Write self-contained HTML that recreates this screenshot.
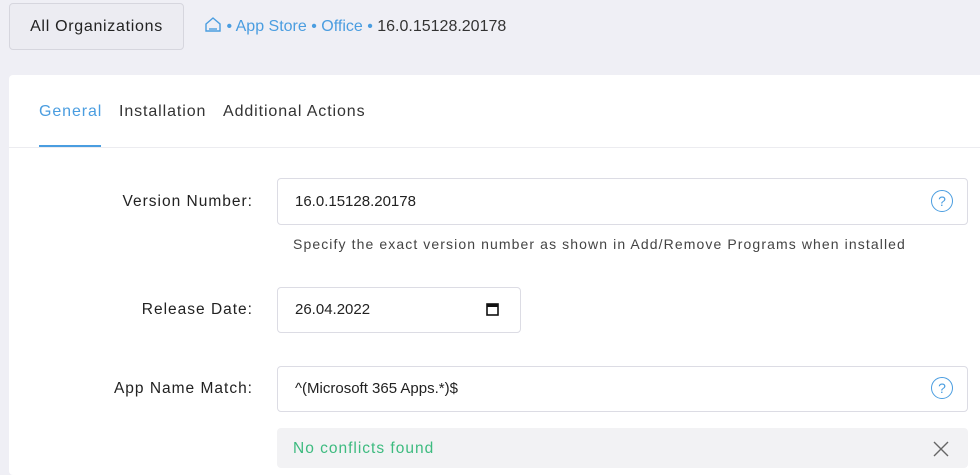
<!DOCTYPE html>
<html><head><style>
body{margin:0;width:980px;height:466px;overflow:hidden;background:#efeff5;font-family:"Liberation Sans",sans-serif;position:relative;color:#333;}
.abs{position:absolute}
.btn{left:9px;top:3px;width:175px;height:47px;border:1px solid #d6d6de;border-radius:4px;background:#ececf2;box-sizing:border-box;font-size:16px;letter-spacing:0.7px;line-height:45px;text-align:center;color:#222}
.bc{left:204px;top:16px;font-size:16px;color:#333;white-space:nowrap}
.bc a{color:#4a9de0}
.card{left:9px;top:75px;width:980px;height:400px;background:#fff;border-radius:4px}
.tab{top:103px;font-size:16px;letter-spacing:0.9px;color:#333}
.lbl{font-size:15.5px;letter-spacing:1px;color:#222;text-align:right;right:727px}
.inp{border:1px solid #dcdce4;border-radius:4px;background:#fff;box-sizing:border-box;font-size:15px;color:#222;padding-left:17px}
.q{width:22px;height:22px;border:1.5px solid #4a9de0;border-radius:50%;color:#4a9de0;font-size:14px;text-align:center;line-height:20px;box-sizing:border-box}
</style></head><body>
<div class="abs btn">All Organizations</div>
<div class="abs bc"><svg width="18" height="16" viewBox="0 0 18 16" style="vertical-align:-1px"><path d="M2 8L9 2L16 8V15H2Z" fill="none" stroke="#4a9de0" stroke-width="1.4"/><path d="M5 13H13" stroke="#4a9de0" stroke-width="1.4"/></svg> <a>• App Store • Office •</a> 16.0.15128.20178</div>
<div class="abs card"></div>
<div class="abs tab" style="left:39px;color:#4a9de0">General</div>
<div class="abs tab" style="left:119px">Installation</div>
<div class="abs tab" style="left:223px">Additional Actions</div>
<div class="abs" style="left:39px;top:145px;width:62px;height:3px;background:#4a9de0"></div>
<div class="abs" style="left:9px;top:147px;width:971px;height:1px;background:#ececf0"></div>

<div class="abs lbl" style="top:193px">Version Number:</div>
<div class="abs inp" style="left:277px;top:178px;width:691px;height:47px;line-height:45px">16.0.15128.20178</div>
<div class="abs q" style="left:931px;top:190px">?</div>
<div class="abs" style="left:293px;top:236px;font-size:14px;letter-spacing:1.1px;color:#444;white-space:nowrap">Specify the exact version number as shown in Add/Remove Programs when installed</div>

<div class="abs lbl" style="top:301px">Release Date:</div>
<div class="abs inp" style="left:277px;top:287px;width:244px;height:46px;line-height:44px">26.04.2022</div>
<svg class="abs" style="left:486px;top:302px" width="13" height="14" viewBox="0 0 13 14"><rect x="1" y="2" width="11" height="11" fill="none" stroke="#111" stroke-width="1.6"/><rect x="1" y="2" width="11" height="3" fill="#111"/></svg>

<div class="abs lbl" style="top:380px">App Name Match:</div>
<div class="abs inp" style="left:277px;top:366px;width:691px;height:46px;line-height:44px">^(Microsoft 365 Apps.*)$</div>
<div class="abs q" style="left:931px;top:377px">?</div>

<div class="abs" style="left:277px;top:428px;width:691px;height:40px;background:#f2f2f4;border-radius:4px"></div>
<div class="abs" style="left:293px;top:440px;font-size:15.5px;letter-spacing:1px;color:#3dbb7f">No conflicts found</div>
<svg class="abs" style="left:933px;top:441px" width="16" height="16"><path d="M1 1L15 15M15 1L1 15" stroke="#666" stroke-width="1.4"/></svg>
</body></html>
